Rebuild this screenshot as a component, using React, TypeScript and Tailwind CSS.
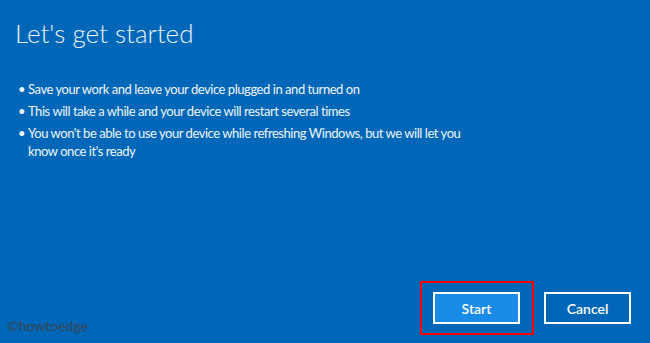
export default function App() {
  const items = [
    'Save your work and leave your device plugged in and turned on',
    'This will take a while and your device will restart several times',
    "You won't be able to use your device while refreshing Windows, but we will let you know once it's ready",
  ];

  return (
    <div
      className="w-[650px] h-[343px] bg-[#0067b8] text-white flex flex-col overflow-hidden"
      style={{ fontFamily: 'Lato, "Noto Sans", sans-serif' }}
    >
      <h1 className="pl-[15px] pt-[15px] text-[26px] font-light leading-[36px] text-[#eaf2fa]">
        Let's get started
      </h1>

      <ul className="mt-[29px] pl-[18px] pr-[8px] flex flex-col gap-[4px] text-[13px] leading-[18px] tracking-[-0.45px] text-[#f0f5fa]">
        {items.map((t) => (
          <li key={t} className="flex">
            <span className="w-[10px] shrink-0">•</span>
            <span className="max-w-[440px]">{t}</span>
          </li>
        ))}
      </ul>

      <div className="flex-1" />

      <div className="flex items-end justify-between pb-[6px] pr-[19px]">
        <div className="pl-[7px] pb-[1px] text-[14px] leading-[20px] text-[#3b4552]">
          ©howtoedge
        </div>
        <div className="flex items-center gap-[10px] mb-[2px]">
          <div className="border-2 border-[#ff0000] pl-[11px] pr-[12px] py-[9px]">
            <button className="w-[87px] h-[32px] bg-[#1a8ce8] border-2 border-white text-[14px] font-semibold">
              Start
            </button>
          </div>
          <button className="w-[87px] h-[32px] border-2 border-white text-[14px] font-semibold">
            Cancel
          </button>
        </div>
      </div>
    </div>
  );
}
